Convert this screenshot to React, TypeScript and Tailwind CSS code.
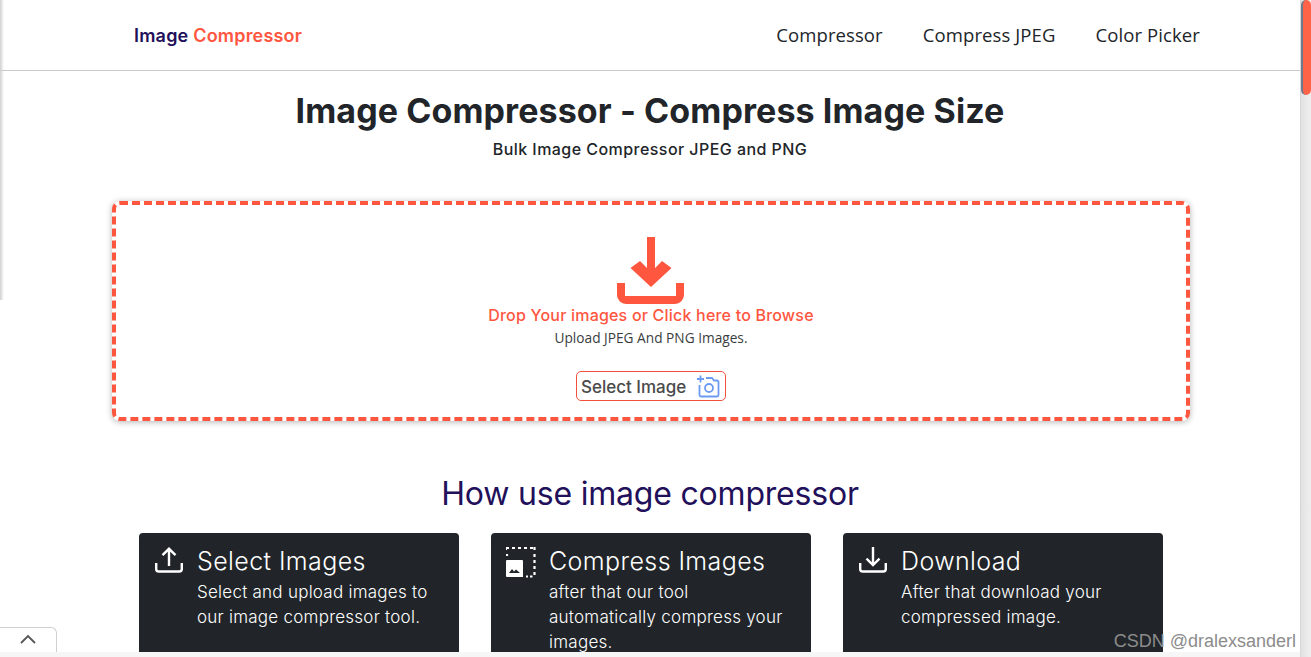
const steps = [
  {
    title: "Select Images",
    text: "Select and upload images to our image compressor tool.",
    icon: "upload",
  },
  {
    title: "Compress Images",
    text: "after that our tool automatically compress your images.",
    icon: "compress",
  },
  {
    title: "Download",
    text: "After that download your compressed image.",
    icon: "download",
  },
];

function StepIcon({ name }: { name: string }) {
  if (name === "compress") {
    return (
      <svg width="30" height="31" viewBox="0 0 30 31" fill="none" className="-ml-px">
        <path d="M0 3V1h3M6 1h3M12 1h3M18 1h3M24 1h3" stroke="#fff" strokeWidth="2" />
        <path d="M28.5 0v3M28.5 7v3M28.5 13v3M28.5 19v3M28.5 25v3M24 29.5h2.500M20 29.5h2M1 7v2" stroke="#fff" strokeWidth="2.2" />
        <path d="M1 13h15a1 1 0 0 1 1 1v16H1a1 1 0 0 1-1-1V14a1 1 0 0 1 1-1z" fill="#fff" />
        <path d="M3 26l3-4 2 2.500 2-2 4 3.500z" fill="#212529" />
      </svg>
    );
  }
  return (
    <svg width="28" height="26" viewBox="0 0 28 26" fill="none" stroke="#fff" strokeWidth="2.4">
      <path d="M1.200 16v6a2.500 2.500 0 0 0 2.500 2.500h20.600a2.500 2.500 0 0 0 2.500-2.500v-6" />
      {name === "upload" ? (
        <path d="M14 19V2M7.500 8.200L14 1.800l6.500 6.400" />
      ) : (
        <path d="M14 0v18M7.500 11.600l6.500 6.400 6.500-6.400" />
      )}
    </svg>
  );
}

export default function App() {
  return (
    <div className="relative flex h-[657px] overflow-hidden bg-white font-['Inter',sans-serif]">
      <div className="min-w-0 flex-1">
        {/* Header */}
        <header className="flex h-[71px] items-center justify-between border-b border-[#c9cacc] pl-[134px] pr-[100px]">
          <a className="text-[18px] font-semibold tracking-[0.2px] text-[#22105a]">
            Image <span className="text-[#ff5640]">Compressor</span>
          </a>
          <nav className="flex gap-10 font-['Open_Sans',sans-serif] text-[18.500px] tracking-[0.1px] text-[#212529]">
            <a>Compressor</a>
            <a>Compress JPEG</a>
            <a>Color Picker</a>
          </nav>
        </header>

        <h1 className="mt-[16px] text-center text-[34px] leading-[48px] font-bold tracking-[0.1px] text-[#212529]">
          Image Compressor - Compress Image Size
        </h1>
        <p className="mt-[2px] text-center text-[16px] leading-6 font-medium tracking-[0.45px] text-[#212529]">
          Bulk Image Compressor JPEG and PNG
        </p>

        {/* Drop zone */}
        <div className="mt-[40px] ml-[112px] flex h-[220px] w-[1078px] flex-col items-center rounded-lg border-4 border-dashed border-[#ff5640] pt-[32px] shadow-[0_1px_6px_rgba(0,0,0,0.3)]">
          <svg width="68" height="67" viewBox="0 0 68 67" fill="#ff5640">
            <path d="M30 0h8v31l7-7 9.500 7L34 50 13.500 31 23 24l7 7z" />
            <path d="M0 46h8v13h51V46h8v12a9 9 0 0 1-9 9H9a9 9 0 0 1-9-9z" />
          </svg>
          <p className="mt-[1px] text-[16px] leading-5 font-medium tracking-[0.2px] text-[#ff5640]">
            Drop Your images or Click here to Browse
          </p>
          <p className="mt-[4px] font-['Open_Sans',sans-serif] text-[13.700px] leading-[18px] text-[#3a3d40]">
            Upload JPEG And PNG Images.
          </p>
          <button className="mt-[24px] flex h-[30px] w-[150px] items-center gap-[10px] rounded-[5px] border border-[#f0503c] pl-[4px] text-[17px] font-medium text-[#4a4a4a]">
            <span className="mt-[3px]">Select Image</span>
            <svg width="24" height="24" viewBox="0 0 24 24" fill="none" stroke="#6e9bf2" strokeWidth="1.8">
              <path d="M1 5h7M4.500 1.500v7" />
              <path d="M3.500 11v10a1.500 1.500 0 0 0 1.500 1.500h16a1.500 1.500 0 0 0 1.500-1.500V8a1.500 1.500 0 0 0-1.500-1.500h-3l-2-2.500H10" />
              <circle cx="13" cy="14" r="4" />
            </svg>
          </button>
        </div>

        <h2 className="mt-[52px] text-center text-[32px] leading-[42px] font-normal tracking-[-0.2px] text-[#22105a]">
          How use image compressor
        </h2>

        {/* Steps */}
        <div className="mt-[18px] ml-[139px] flex gap-8">
          {steps.map((s) => (
            <div key={s.title} className="flex h-[140px] w-[320px] gap-[12px] rounded-sm bg-[#212529] pt-[13px] pl-[16px] text-white">
              <div className="w-[30px] shrink-0 pt-px">
                <StepIcon name={s.icon} />
              </div>
              <div className="w-[246px]">
                <h3 className="text-[25px] leading-[30px] font-light tracking-[0.4px]">{s.title}</h3>
                <p className="mt-[4px] text-[17px] leading-[25px] font-light tracking-[0.25px]">{s.text}</p>
              </div>
            </div>
          ))}
        </div>
      </div>

      {/* Scrollbar */}
      <div className="w-[11px] shrink-0 border-l border-[#d8d8d8] bg-gradient-to-r from-[#e2e2e2] to-[#efefef]">
        <div className="h-[95px] rounded-md border-l-2 border-[#6f7a8a] bg-[#ff6347]" />
      </div>

      {/* Browser chrome bits over the page */}
      <div className="absolute top-0 left-0 h-[300px] w-[4px] bg-gradient-to-r from-[#d0d0d0] to-transparent" />
      <div className="absolute right-[11px] bottom-0 left-0 h-[5px] bg-[#f6f6f6]" />
      <div className="absolute bottom-[5px] left-0 flex h-[25px] w-[57px] justify-center rounded-tr-md border-t border-r border-[#d0d0d0] bg-white pt-1.5">
        <svg width="16" height="10" viewBox="0 0 16 10" fill="none" stroke="#555" strokeWidth="1.8">
          <path d="M1 9l7-7 7 7" />
        </svg>
      </div>
      <div className="absolute right-[15px] bottom-[6px] font-['Liberation_Sans',sans-serif] text-[18px] leading-5 text-[#8c8c8c]">
        CSDN @dralexsanderl
      </div>
    </div>
  );
}
